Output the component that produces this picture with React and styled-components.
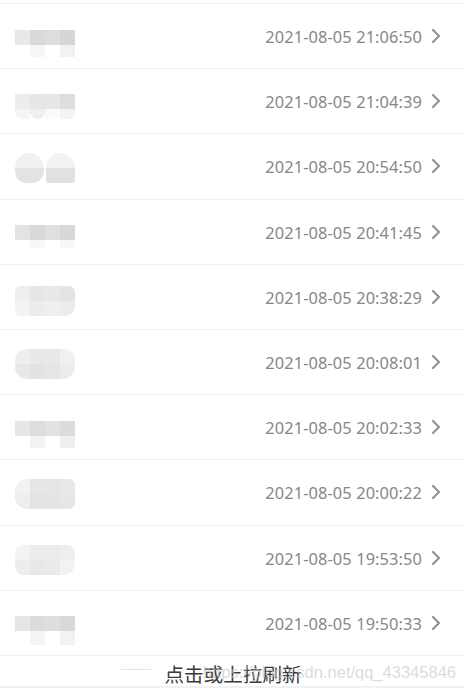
import React from "react";
import styled, { createGlobalStyle } from "styled-components";

const Global = createGlobalStyle`
  html, body { margin: 0; padding: 0; background: #f1f1f1; }
  body { font-family: "Noto Sans", "Noto Sans CJK SC", sans-serif; }
  #root { width: 465px; }
`;

const Page = styled.div`
  position: relative;
  width: 465px;
  background: #fff;
  overflow: hidden;
`;

const List = styled.ul`
  list-style: none;
  margin: 0;
  padding: 3px 0 0;
`;

const Row = styled.li`
  box-sizing: border-box;
  height: 65.2px;
  border-top: 1px solid #f0f0f0;
  padding: 0 24px 0 15px;
  display: flex;
  align-items: center;
  &:last-child { border-bottom: 1px solid #f0f0f0; height: 66.2px; }
`;

const Thumb = styled.div`
  align-self: flex-start;
  margin-top: ${(p) => p.$top}px;
  width: 60px;
  display: grid;
  grid-template-columns: repeat(4, 15px);
  grid-template-rows: ${(p) => p.$rows};
`;

const Cell = styled.span`
  display: block;
  background: ${(p) => p.$c};
  border-radius: ${(p) => p.$r || "0"};
`;

const Blob = styled.div`
  align-self: flex-start;
  margin-top: ${(p) => p.$top}px;
  width: 60px;
  height: ${(p) => p.$h}px;
  display: flex;
  gap: 2px;
`;

const Ball = styled.span`
  flex: 1;
  border-radius: ${(p) => p.$r};
  background: linear-gradient(to bottom, ${(p) => p.$a} 0 50%, ${(p) => p.$b} 50% 100%);
`;

const Time = styled.span`
  margin-left: auto;
  margin-top: 1px;
  font-size: 16.4px;
  color: #878787;
  letter-spacing: 0.1px;
`;

const Chevron = styled.svg`
  margin-left: 9px;
  width: 10px;
  height: 16px;
  flex: none;
`;

const Footer = styled.div`
  height: 30px;
  display: flex;
  align-items: center;
  justify-content: center;
  gap: 13px;
  border-bottom: 2px solid #f1f1f1;
`;

const Rule = styled.span`
  width: 30px;
  height: 1px;
  background: #e4e4e4;
  margin-top: -2px;
`;

const FooterText = styled.span`
  font-family: "Noto Sans CJK SC", sans-serif;
  font-size: 19.6px;
  color: #3a3a3a;
  line-height: 1;
  margin-top: 6px;
  margin-right: 42px;
`;

const Watermark = styled.span`
  position: absolute;
  right: 9px;
  bottom: 6px;
  font-family: "Liberation Sans", Arial, sans-serif;
  font-size: 16.5px;
  color: rgba(200, 200, 200, 0.65);
  pointer-events: none;
  white-space: nowrap;
`;

const rows = [
  { t: "2021-08-05 21:06:50", kind: "grid", top: 26, rows: "15px 12px",
    cells: ["#e8e8e8", "#d9d9d9", "#dddddd", "#d6d6d6", "transparent", "#f6f6f6", "transparent", "#f2f2f2"] },
  { t: "2021-08-05 21:04:39", kind: "grid", top: 25, rows: "15px 10px",
    cells: ["#ededed", "#e6e6e6", "#e7e7e7", "#dedede", "#f5f5f5", "#efefef", "#fafafa", "#f3f3f3"], r: [0,0,0,0,"0 0 0 8px","0 0 8px 8px","0 0 8px 0","0 0 6px 0"] },
  { t: "2021-08-05 20:54:50", kind: "blob", top: 19, h: 30, a: "#f1f1f1", b: "#e3e3e3", r1: "50% 50% 40% 40%", r2: "50% 50% 10% 10%" },
  { t: "2021-08-05 20:41:45", kind: "grid", top: 25, rows: "15px 8px",
    cells: ["#e3e3e3", "#d9d9d9", "#e0e0e0", "#d8d8d8", "transparent", "#f8f8f8", "transparent", "#f8f8f8"] },
  { t: "2021-08-05 20:38:29", kind: "grid", top: 21, rows: "15px 15px",
    cells: ["#eeeeee", "#e6e6e6", "#e9e9e9", "#e4e4e4", "#f3f3f3", "#ececec", "#efefef", "#ececec"], r: ["6px 0 0 0",0,0,"0 6px 0 0","0 0 0 6px",0,0,"0 0 10px 0"] },
  { t: "2021-08-05 20:08:01", kind: "grid", top: 19, rows: "15px 15px",
    cells: ["#eeeeee", "#e8e8e8", "#e8e8e8", "#f0f0f0", "#e8e8e8", "#e2e2e2", "#e6e6e6", "#ececec"], r: ["12px 0 0 0",0,0,"0 12px 0 0","0 0 0 12px",0,0,"0 0 12px 0"] },
  { t: "2021-08-05 20:02:33", kind: "grid", top: 26, rows: "15px 12px",
    cells: ["#e6e6e6", "#dddddd", "#e2e2e2", "#dcdcdc", "transparent", "#f3f3f3", "transparent", "#eeeeee"] },
  { t: "2021-08-05 20:00:22", kind: "grid", top: 19, rows: "15px 15px",
    cells: ["#f2f2f2", "#e6e6e6", "#e6e6e6", "#e8e8e8", "#eeeeee", "#e3e3e3", "#e4e4e4", "#e6e6e6"], r: ["12px 0 0 0",0,0,"0 6px 0 0","0 0 0 12px",0,0,"0 0 6px 0"] },
  { t: "2021-08-05 19:53:50", kind: "grid", top: 19, rows: "15px 15px",
    cells: ["#f3f3f3", "#ececec", "#ececec", "#eeeeee", "#ededed", "#e8e8e8", "#eaeaea", "#f2f2f2"], r: ["8px 0 0 0",0,0,"0 8px 0 0","0 0 0 8px",0,0,"0 0 12px 0"] },
  { t: "2021-08-05 19:50:33", kind: "grid", top: 25, rows: "15px 14px",
    cells: ["#e6e6e6", "#dcdcdc", "#dedede", "#d9d9d9", "transparent", "#f5f5f5", "transparent", "#f2f2f2"] },
];

function Arrow() {
  return (
    <Chevron viewBox="0 0 10 16">
      <polyline points="2,2 8,8 2,14" fill="none" stroke="#939393" strokeWidth="2.2" strokeLinecap="round" strokeLinejoin="round" />
    </Chevron>
  );
}

export default function App() {
  return (
    <Page>
      <Global />
      <List>
        {rows.map((row) => (
          <Row key={row.t}>
            {row.kind === "grid" ? (
              <Thumb $top={row.top} $rows={row.rows}>
                {row.cells.map((c, i) => (
                  <Cell key={i} $c={c} $r={row.r ? row.r[i] || "0" : "0"} />
                ))}
              </Thumb>
            ) : (
              <Blob $top={row.top} $h={row.h}>
                <Ball $a={row.a} $b={row.b} $r={row.r1} />
                <Ball $a="#f3f3f3" $b="#e1e1e1" $r={row.r2} />
              </Blob>
            )}
            <Time>{row.t}</Time>
            <Arrow />
          </Row>
        ))}
      </List>
      <Footer>
        <Rule />
        <FooterText>点击或上拉刷新</FooterText>
      </Footer>
      <Watermark>https://blog.csdn.net/qq_43345846</Watermark>
    </Page>
  );
}
